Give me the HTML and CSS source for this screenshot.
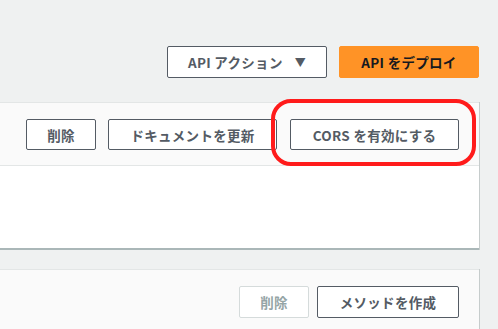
FILE: index.html
```html
<!DOCTYPE html>
<html lang="ja">
<head>
<meta charset="utf-8">
<link rel="stylesheet" href="styles.css">
</head>
<body>
<div class="page">
  <div class="toolbar">
    <button class="btn btn-actions">API アクション <span class="caret">▼</span></button>
    <button class="btn btn-primary">API をデプロイ</button>
  </div>
  <div class="panel panel-resource">
    <div class="panel-head">
      <button class="btn btn-del">削除</button>
      <button class="btn btn-doc">ドキュメントを更新</button>
      <button class="btn btn-cors">CORS を有効にする</button>
    </div>
    <div class="panel-body"></div>
    <div class="highlight"></div>
  </div>
  <div class="panel panel-method">
    <div class="panel-head">
      <button class="btn btn-disabled">削除</button>
      <button class="btn btn-create">メソッドを作成</button>
    </div>
  </div>
</div>
</body>
</html>
```

FILE: styles.css
```css
* { box-sizing: border-box; }
html, body {
  margin: 0;
  padding: 0;
  background: #eff1f1;
  width: 498px;
  height: 329px;
  overflow: hidden;
  font-family: "Noto Sans CJK JP", "Noto Sans", sans-serif;
}
.page { width: 498px; }
.toolbar {
  height: 102px;
  display: flex;
  justify-content: flex-end;
  align-items: flex-end;
  gap: 12px;
  padding: 0 19px 24px 0;
}
.btn {
  font-family: "Noto Sans CJK JP", "Noto Sans", sans-serif;
  font-weight: 700;
  font-size: 13.5px;
  color: #545b64;
  background: #fff;
  border: 1px solid #545b64;
  border-radius: 2px;
  height: 32px;
  padding: 0;
  display: flex;
  align-items: center;
  justify-content: center;
  letter-spacing: 0.3px;
}
.btn-actions { width: 160px; gap: 8px; }
.caret { font-size: 11px; margin-left: 4px; }
.btn-primary {
  width: 140px;
  background: #ff9326;
  border-color: #ff9326;
  color: #16191f;
}
.panel {
  width: 480px;
  border-right: 1px solid #c6cccc;
  position: relative;
}
.panel-head {
  background: #fafafa;
  display: flex;
  justify-content: flex-end;
  align-items: flex-start;
  padding: 16px 20px 0 0;
}
.panel-resource .panel-head {
  height: 64px;
  border-top: 1px solid #e3e6e6;
  border-bottom: 1px solid #e3e6e6;
}
.panel-resource .panel-head .btn { height: 31px; }
.btn-del { width: 70px; }
.btn-doc { width: 169px; margin-left: 12px; }
.btn-cors { width: 169px; margin-left: 13px; }
.panel-body {
  height: 84px;
  background: #fff;
  border-bottom: 2px solid #aab7b8;
}
.highlight {
  position: absolute;
  left: 271px;
  top: -3px;
  width: 205px;
  height: 67px;
  border: 4px solid #ff1b1b;
  border-radius: 20px;
}
.panel-method {
  margin-top: 19px;
}
.panel-method .panel-head {
  height: 61px;
  border-top: 1px solid #e3e6e6;
}
.btn-disabled {
  width: 70px;
  color: #95a5a6;
  border-color: #d5dbdb;
}
.btn-create { width: 142px; margin-left: 8px; }
```
